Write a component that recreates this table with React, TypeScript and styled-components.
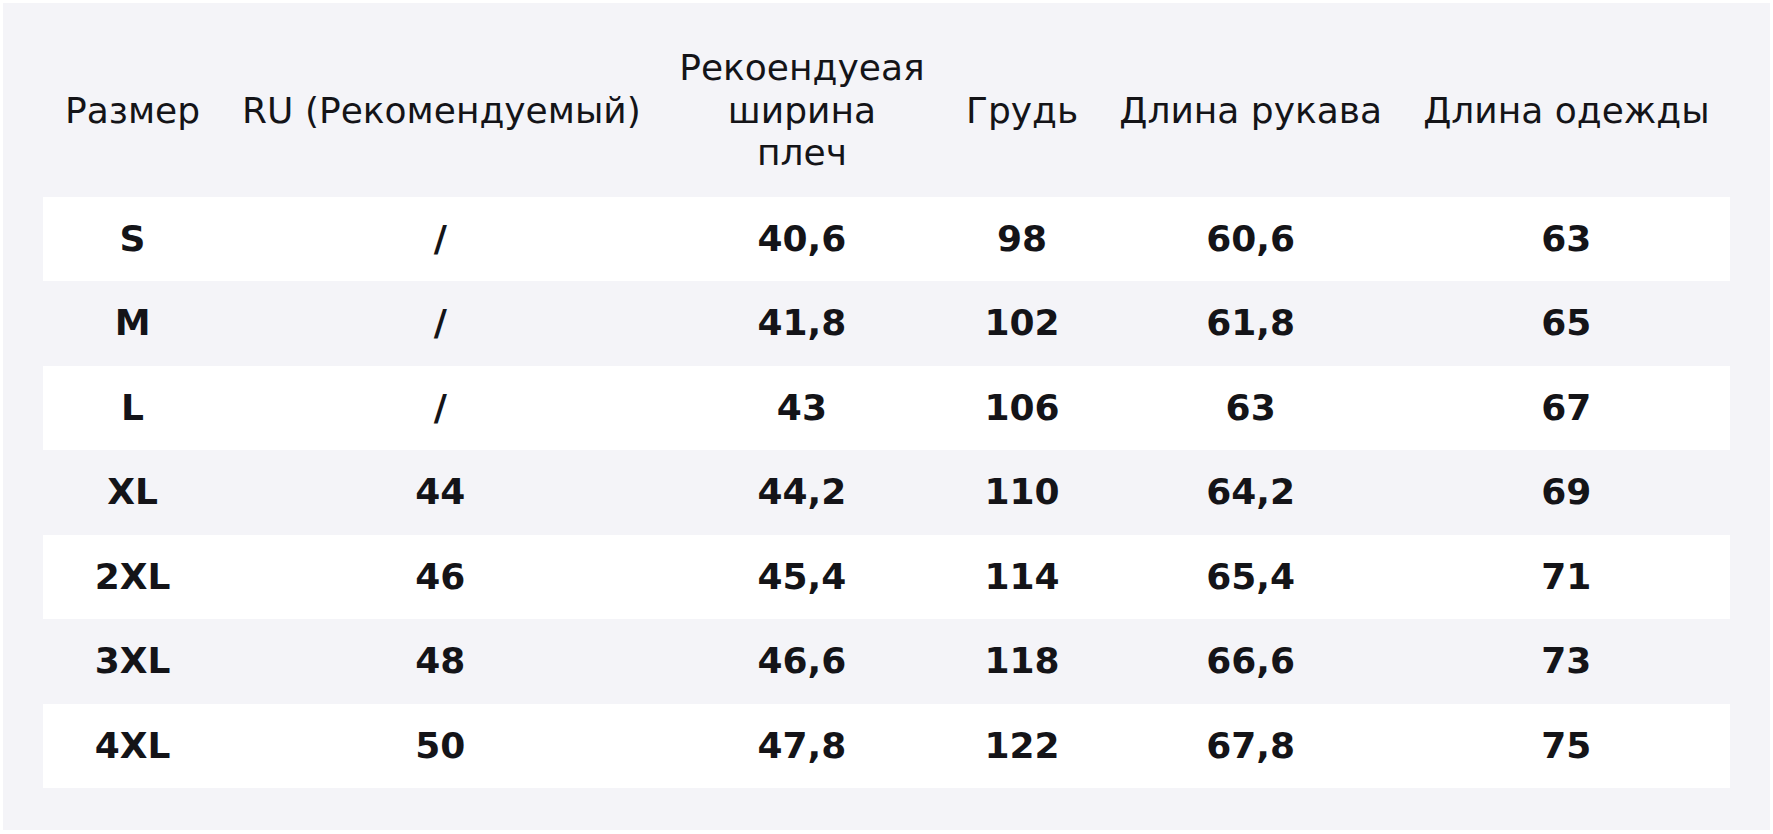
import React from 'react';
import styled, { createGlobalStyle } from 'styled-components';

const GlobalStyle = createGlobalStyle`
  html, body {
    margin: 0;
    padding: 0;
    background: #ffffff;
  }
  body {
    font-family: "DejaVu Sans", "Noto Sans", sans-serif;
    color: #141418;
  }
`;

const Page = styled.div`
  padding: 3px;
  width: 1767px;
`;

const Panel = styled.div`
  background: #f4f4f8;
  padding: 22px 40px 42px;
`;

const Table = styled.table`
  width: 100%;
  border-collapse: collapse;
  table-layout: fixed;
`;

const HeadCell = styled.th<{ $wrap: boolean }>`
  font-size: 36px;
  line-height: 42.5px;
  font-weight: 400;
  text-align: center;
  vertical-align: middle;
  white-space: ${({ $wrap }) => ($wrap ? 'normal' : 'nowrap')};
  padding: 22px 20px;
`;

const Row = styled.tr<{ $striped: boolean }>`
  background: ${({ $striped }) => ($striped ? '#ffffff' : 'transparent')};
`;

const Cell = styled.td`
  font-size: 36px;
  line-height: 42.5px;
  font-weight: 700;
  text-align: center;
  padding: 21px 20px;
`;

const columns = [
  { title: 'Размер', width: 179, wrap: false },
  { title: 'RU (Рекомендуемый)', width: 436, wrap: false },
  { title: 'Рекоендуеая ширина плеч', width: 287, wrap: true },
  { title: 'Грудь', width: 153, wrap: false },
  { title: 'Длина рукава', width: 304, wrap: false },
  { title: 'Длина одежды', width: 327, wrap: false },
];

const rows = [
  ['S', '/', '40,6', '98', '60,6', '63'],
  ['M', '/', '41,8', '102', '61,8', '65'],
  ['L', '/', '43', '106', '63', '67'],
  ['XL', '44', '44,2', '110', '64,2', '69'],
  ['2XL', '46', '45,4', '114', '65,4', '71'],
  ['3XL', '48', '46,6', '118', '66,6', '73'],
  ['4XL', '50', '47,8', '122', '67,8', '75'],
];

const App = () => (
  <Page>
    <GlobalStyle />
    <Panel>
      <Table>
        <colgroup>
          {columns.map((c) => (
            <col key={c.title} style={{ width: c.width }} />
          ))}
        </colgroup>
        <thead>
          <tr>
            {columns.map((c) => (
              <HeadCell key={c.title} $wrap={c.wrap}>
                {c.title}
              </HeadCell>
            ))}
          </tr>
        </thead>
        <tbody>
          {rows.map((r, i) => (
            <Row key={r[0]} $striped={i % 2 === 0}>
              {r.map((v, j) => (
                <Cell key={j}>{v}</Cell>
              ))}
            </Row>
          ))}
        </tbody>
      </Table>
    </Panel>
  </Page>
);

export default App;
